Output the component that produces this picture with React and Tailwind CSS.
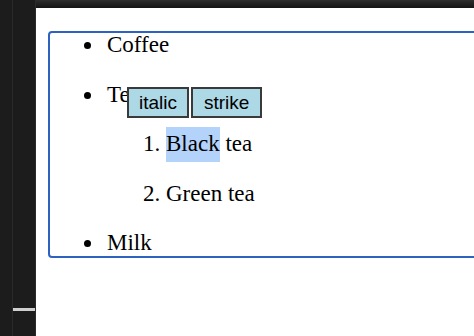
import React from 'react';

const serif = { fontFamily: '"Liberation Serif", "Times New Roman", serif' };

function Bullet({ children }) {
  return (
    <li className="flex items-center h-[25px]">
      <span className="w-[7px] h-[7px] rounded-full bg-black ml-[34px] mr-[16px]"></span>
      <span>{children}</span>
    </li>
  );
}

function Numbered({ n, children }) {
  return (
    <li className="flex items-center h-[25px] pl-[93px]">
      <span className="w-[23px]">{n}.</span>
      {children}
    </li>
  );
}

export default function App() {
  return (
    <div className="w-[474px] h-[336px] flex bg-white overflow-hidden">
      {/* left dark rail */}
      <div className="w-[36px] h-full bg-[#1c1c1c] flex border-r border-[#2b2b2b] shrink-0">
        <div className="w-[13px] h-full border-r border-[#2a2a2a]"></div>
        <div className="flex-1 flex flex-col justify-end pb-[25px]">
          <div className="h-[3px] bg-[#cfcfcf]"></div>
        </div>
      </div>

      <div className="flex-1 flex flex-col min-w-0">
        <div className="h-[8px] bg-gradient-to-b from-[#2e2e2e] to-[#141414] shrink-0"></div>
        <div className="flex-1 pt-[23px] pl-[12px]">
          <div
            className="relative w-[440px] border-[2.5px] border-[#2d62c0] rounded-[4px] text-[23px] text-black"
            style={serif}
          >
            <ul className="flex flex-col gap-[24.5px]">
              <Bullet>Coffee</Bullet>
              <Bullet>Tea</Bullet>
              <Numbered n={1}>
                <span className="bg-[#b4d3fb]">Black</span>&nbsp;tea
              </Numbered>
              <Numbered n={2}>Green tea</Numbered>
              <Bullet>Milk</Bullet>
            </ul>

            <div
              className="absolute left-[77px] top-[54px] flex gap-[2px] text-[19px]"
              style={{ fontFamily: '"Liberation Sans", Arial, sans-serif' }}
            >
              <button className="h-[31px] px-[10px] bg-[#add8e6] border-2 border-[#3a3a3a] leading-none">italic</button>
              <button className="h-[31px] px-[11px] bg-[#add8e6] border-2 border-[#3a3a3a] leading-none">strike</button>
            </div>
          </div>
        </div>
      </div>
    </div>
  );
}
